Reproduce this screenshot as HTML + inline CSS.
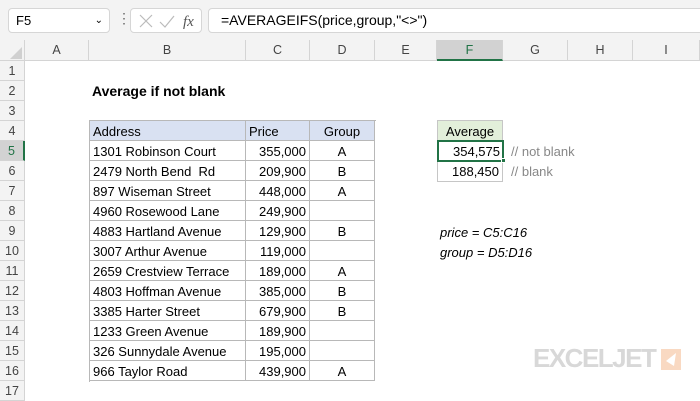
<!DOCTYPE html>
<html><head><style>
*{margin:0;padding:0;box-sizing:border-box}
body{width:700px;height:400px;overflow:hidden;background:#fff;font-family:"Liberation Sans",Calibri,sans-serif;font-size:13px;color:#000;position:relative}
.a{position:absolute;white-space:nowrap}
.top{left:0;top:0;width:700px;height:40px;background:#f3f3f3}
.box{background:#fff;border:1px solid #d6d6d6;border-radius:4px}
.ch{top:40px;height:21px;background:#f3f3f3;border-right:1px solid #d4d4d4;border-bottom:1px solid #d4d4d4;text-align:center;line-height:21px;color:#444;font-size:12.5px}
.rh{left:0;width:25px;height:20px;background:#f3f3f3;border-bottom:1px solid #d4d4d4;border-right:1px solid #d4d4d4;text-align:center;line-height:20px;color:#444;font-size:12.5px}
.c{height:20px;line-height:21px;border-right:1px solid #b8b8b8;border-bottom:1px solid #b8b8b8;padding:0 3px}
</style></head><body>
<div class="a top"></div>
<div class="a box" style="left:8px;top:8px;width:102px;height:25px;line-height:23px;padding-left:7px;font-size:13px">F5<span class="a" style="right:6px;top:0;font-size:10px">&#8964;</span></div>
<div class="a" style="left:117px;top:10px;color:#666;font-size:14px">&#8942;</div>
<div class="a box" style="left:130px;top:8px;width:72px;height:25px"></div>
<svg class="a" style="left:138px;top:13px" width="60" height="16"><path d="M2 2L14 14M14 2L2 14" stroke="#bbb" stroke-width="1.2" fill="none"/><path d="M22 9L27 14L36 3" stroke="#bbb" stroke-width="1.2" fill="none"/><text x="45" y="13" font-family="Liberation Serif" font-style="italic" font-size="15" fill="#555">fx</text></svg>
<div class="a box" style="left:208px;top:8px;width:500px;height:25px;line-height:23px;padding-left:12px;font-size:14px">=AVERAGEIFS(price,group,"&lt;&gt;")</div>
<div class="a ch" style="left:0;width:25px"></div>
<svg class="a" style="left:10px;top:47px" width="12" height="12"><path d="M12 0L12 12L0 12Z" fill="#d0d0d0"/></svg>
<div class="a ch" style="left:25px;width:64px">A</div>
<div class="a ch" style="left:89px;width:157px">B</div>
<div class="a ch" style="left:246px;width:64px">C</div>
<div class="a ch" style="left:310px;width:65px">D</div>
<div class="a ch" style="left:375px;width:62px">E</div>
<div class="a ch" style="left:437px;width:66px;background:#d2d2d2;border-bottom:2px solid #217346;color:#217346">F</div>
<div class="a ch" style="left:503px;width:65px">G</div>
<div class="a ch" style="left:568px;width:65px">H</div>
<div class="a ch" style="left:633px;width:67px">I</div>
<div class="a rh" style="top:61px">1</div><div class="a rh" style="top:81px">2</div><div class="a rh" style="top:101px">3</div><div class="a rh" style="top:121px">4</div>
<div class="a rh" style="top:141px;background:#d2d2d2;border-right:2px solid #217346;color:#217346">5</div>
<div class="a rh" style="top:161px">6</div><div class="a rh" style="top:181px">7</div><div class="a rh" style="top:201px">8</div><div class="a rh" style="top:221px">9</div><div class="a rh" style="top:241px">10</div><div class="a rh" style="top:261px">11</div><div class="a rh" style="top:281px">12</div><div class="a rh" style="top:301px">13</div><div class="a rh" style="top:321px">14</div><div class="a rh" style="top:341px">15</div><div class="a rh" style="top:361px">16</div><div class="a rh" style="top:381px">17</div>
<div class="a" style="left:92px;top:83px;font-weight:bold;font-size:14px">Average if not blank</div>
<div class="a" style="left:89px;top:120px;width:287px;height:262px;border-left:1px solid #b8b8b8;border-top:1px solid #b8b8b8"></div>
<div class="a c" style="left:90px;top:121px;width:156px;background:#d9e1f2">Address</div>
<div class="a c" style="left:246px;top:121px;width:64px;background:#d9e1f2">Price</div>
<div class="a c" style="left:310px;top:121px;width:65px;background:#d9e1f2;text-align:center">Group</div>
<div class="a c" style="left:90px;top:141px;width:156px">1301 Robinson Court</div><div class="a c" style="left:246px;top:141px;width:64px;text-align:right">355,000</div><div class="a c" style="left:310px;top:141px;width:65px;text-align:center">A</div>
<div class="a c" style="left:90px;top:161px;width:156px">2479 North Bend&nbsp; Rd</div><div class="a c" style="left:246px;top:161px;width:64px;text-align:right">209,900</div><div class="a c" style="left:310px;top:161px;width:65px;text-align:center">B</div>
<div class="a c" style="left:90px;top:181px;width:156px">897 Wiseman Street</div><div class="a c" style="left:246px;top:181px;width:64px;text-align:right">448,000</div><div class="a c" style="left:310px;top:181px;width:65px;text-align:center">A</div>
<div class="a c" style="left:90px;top:201px;width:156px">4960 Rosewood Lane</div><div class="a c" style="left:246px;top:201px;width:64px;text-align:right">249,900</div><div class="a c" style="left:310px;top:201px;width:65px;text-align:center"></div>
<div class="a c" style="left:90px;top:221px;width:156px">4883 Hartland Avenue</div><div class="a c" style="left:246px;top:221px;width:64px;text-align:right">129,900</div><div class="a c" style="left:310px;top:221px;width:65px;text-align:center">B</div>
<div class="a c" style="left:90px;top:241px;width:156px">3007 Arthur Avenue</div><div class="a c" style="left:246px;top:241px;width:64px;text-align:right">119,000</div><div class="a c" style="left:310px;top:241px;width:65px;text-align:center"></div>
<div class="a c" style="left:90px;top:261px;width:156px">2659 Crestview Terrace</div><div class="a c" style="left:246px;top:261px;width:64px;text-align:right">189,000</div><div class="a c" style="left:310px;top:261px;width:65px;text-align:center">A</div>
<div class="a c" style="left:90px;top:281px;width:156px">4803 Hoffman Avenue</div><div class="a c" style="left:246px;top:281px;width:64px;text-align:right">385,000</div><div class="a c" style="left:310px;top:281px;width:65px;text-align:center">B</div>
<div class="a c" style="left:90px;top:301px;width:156px">3385 Harter Street</div><div class="a c" style="left:246px;top:301px;width:64px;text-align:right">679,900</div><div class="a c" style="left:310px;top:301px;width:65px;text-align:center">B</div>
<div class="a c" style="left:90px;top:321px;width:156px">1233 Green Avenue</div><div class="a c" style="left:246px;top:321px;width:64px;text-align:right">189,900</div><div class="a c" style="left:310px;top:321px;width:65px;text-align:center"></div>
<div class="a c" style="left:90px;top:341px;width:156px">326 Sunnydale Avenue</div><div class="a c" style="left:246px;top:341px;width:64px;text-align:right">195,000</div><div class="a c" style="left:310px;top:341px;width:65px;text-align:center"></div>
<div class="a c" style="left:90px;top:361px;width:156px">966 Taylor Road</div><div class="a c" style="left:246px;top:361px;width:64px;text-align:right">439,900</div><div class="a c" style="left:310px;top:361px;width:65px;text-align:center">A</div>
<div class="a" style="left:437px;top:120px;width:66px;height:62px;border:1px solid #c6c6c6"></div>
<div class="a" style="left:438px;top:121px;width:64px;height:20px;background:#e2efda;text-align:center;line-height:21px;border-bottom:1px solid #c6c6c6">Average</div>
<div class="a" style="left:438px;top:161px;width:64px;height:20px;text-align:right;line-height:21px;padding-right:3px">188,450</div>
<div class="a" style="left:437px;top:140px;width:67px;height:22px;border:2px solid #217346;text-align:right;line-height:19px;padding-right:2px">354,575</div>
<div class="a" style="left:501px;top:158px;width:5px;height:5px;background:#217346;border:1px solid #fff"></div>
<div class="a" style="left:511px;top:144px;color:#888">// not blank</div>
<div class="a" style="left:511px;top:164px;color:#888">// blank</div>
<div class="a" style="left:440px;top:225px;font-style:italic">price = C5:C16</div>
<div class="a" style="left:440px;top:245px;font-style:italic">group = D5:D16</div>
<div class="a" style="left:533px;top:343px;font-weight:bold;font-size:26px;color:#d8d8d8;letter-spacing:-1.5px;font-family:'Liberation Sans',sans-serif">EXCELJET</div>
<svg class="a" style="left:661px;top:349px" width="20" height="21"><rect width="20" height="21" fill="#f9d9c2"/><path d="M15 4L5 12L13 17Z" fill="#fff"/></svg>
</body></html>
